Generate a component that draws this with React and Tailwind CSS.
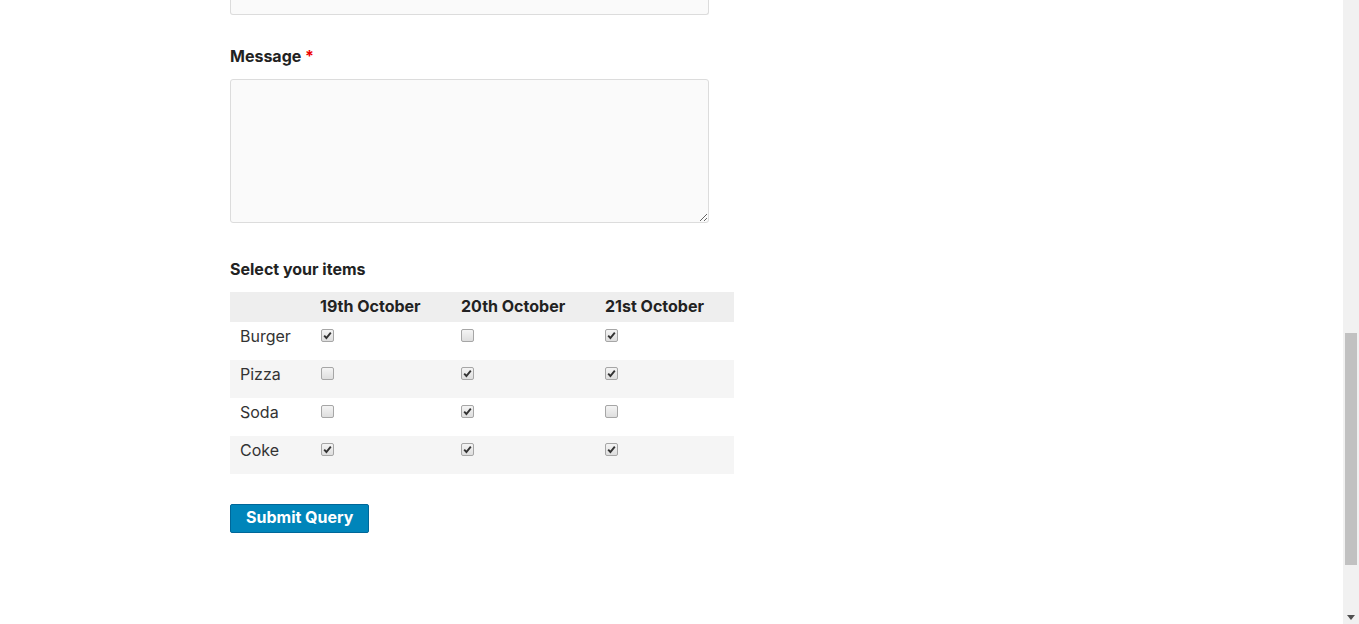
import React from "react";

const rows = [
  { name: "Burger", picks: [true, false, true] },
  { name: "Pizza", picks: [false, true, true] },
  { name: "Soda", picks: [false, true, false] },
  { name: "Coke", picks: [true, true, true] },
];

function Box({ checked }) {
  return (
    <span className="flex h-[13px] w-[13px] items-center justify-center rounded-[2px] border border-[#a6a6a6] bg-gradient-to-b from-[#f4f4f4] to-[#dedede]">
      {checked && (
        <svg width="9" height="9" viewBox="0 0 9 9">
          <path d="M1.2 4.6 L3.4 7 L7.8 1.6" fill="none" stroke="#333" strokeWidth="1.9" />
        </svg>
      )}
    </span>
  );
}

function App() {
  return (
    <div className="flex h-[624px] w-full overflow-hidden bg-white font-['Inter',sans-serif] text-[#333]">
      {/* Form */}
      <div className="flex-1 pl-[230px]">
        <div className="h-[15px] w-[479px] rounded-b-[3px] border border-t-0 border-[#dcdcdc] bg-[#fafafa]" />

        <label className="mt-[29px] block text-[16px] leading-[24px] font-bold text-[#222]">
          Message <span className="text-[#ee0000]">*</span>
        </label>
        <textarea className="mt-[11px] block h-[144px] w-[479px] rounded-[3px] border border-[#dcdcdc] bg-[#fafafa]" />

        <p className="mt-[34px] text-[16px] leading-[24px] font-bold text-[#222]">Select your items</p>

        <table className="mt-[11px] w-[504px] border-collapse text-left">
          <thead>
            <tr className="h-[30px] bg-[#eeeeee] text-[16px] leading-[28px] font-bold text-[#222]">
              <th className="w-[80px]" />
              <th className="w-[141px] pl-[10px] align-top font-bold">19th October</th>
              <th className="w-[144px] pl-[10px] align-top font-bold">20th October</th>
              <th className="pl-[10px] align-top font-bold">21st October</th>
            </tr>
          </thead>
          <tbody>
            {rows.map((r, i) => (
              <tr key={r.name} className={i % 2 ? "h-[38px] bg-[#f5f5f5]" : "h-[38px] bg-white"}>
                <td className="pl-[10px] align-top pt-[2px] text-[16px] leading-[24px]">{r.name}</td>
                {r.picks.map((c, j) => (
                  <td key={j} className={j === 0 ? "pl-[11px] align-top pt-[7px]" : "pl-[10px] align-top pt-[7px]"}>
                    <Box checked={c} />
                  </td>
                ))}
              </tr>
            ))}
          </tbody>
        </table>

        <button className="mt-[30px] h-[29px] rounded-[2px] border border-[#006799] bg-[#0085ba] px-[15px] pb-[3px] text-[16px] leading-[22px] font-bold text-white">
          Submit Query
        </button>
      </div>

      {/* Scrollbar */}
      <div className="flex w-[16px] flex-col items-center bg-[#f1f1f1]">
        <div className="mt-[333px] h-[232px] w-[12px] bg-[#c1c1c1]" />
        <div className="mt-auto mb-[4px]">
          <svg width="8" height="5" viewBox="0 0 8 5">
            <path d="M0 0 H8 L4 5 Z" fill="#505050" />
          </svg>
        </div>
      </div>
    </div>
  );
}

export default App;
